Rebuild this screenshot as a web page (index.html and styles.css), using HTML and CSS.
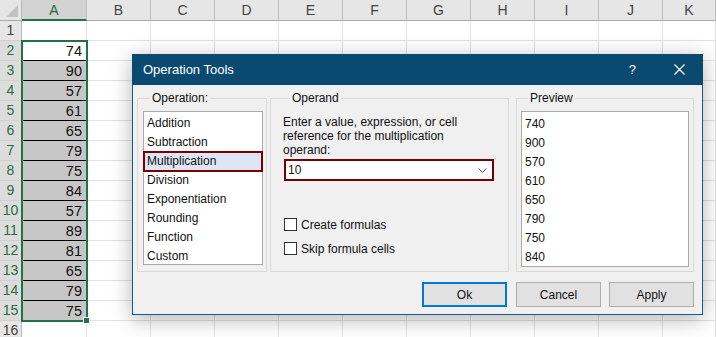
FILE: index.html
```html
<!DOCTYPE html>
<html lang="en">
<head>
  <meta charset="UTF-8">
  <title>Operation Tools</title>
  <link rel="stylesheet" href="styles.css">
</head>
<body>

  <div class="sheet" id="sheet">
    <div class="selection"><span class="handle"></span></div>
  </div>

  <div class="dialog">
    <div class="titlebar">
      <span class="title">Operation Tools</span>
      <span class="help">?</span>
      <svg class="close" width="11" height="11" viewBox="0 0 11 11">
        <path d="M0.5 0.5 L10.5 10.5 M10.5 0.5 L0.5 10.5" stroke="#fff" stroke-width="1.2" fill="none" />
      </svg>
    </div>

    <div class="body">
      <div class="groups">
        <fieldset class="group group-op">
          <legend>Operation:</legend>
          <ul class="list">
            <li>Addition</li>
            <li>Subtraction</li>
            <li class="selected">Multiplication</li>
            <li>Division</li>
            <li>Exponentiation</li>
            <li>Rounding</li>
            <li>Function</li>
            <li>Custom</li>
          </ul>
        </fieldset>

        <fieldset class="group group-operand">
          <legend>Operand</legend>
          <p class="hint">Enter a value, expression, or cell reference for the multiplication operand:</p>
          <div class="combo">
            <span>10</span>
            <svg width="9" height="5" viewBox="0 0 9 5">
              <path d="M0.5 0.5 L4.5 4.5 L8.5 0.5" stroke="#555" stroke-width="1" fill="none" />
            </svg>
          </div>
          <label class="check"><span class="box"></span>Create formulas</label>
          <label class="check"><span class="box"></span>Skip formula cells</label>
        </fieldset>

        <fieldset class="group group-preview">
          <legend>Preview</legend>
          <ul class="list preview">
            <li>740</li>
            <li>900</li>
            <li>570</li>
            <li>610</li>
            <li>650</li>
            <li>790</li>
            <li>750</li>
            <li>840</li>
          </ul>
        </fieldset>
      </div>

      <div class="buttons">
        <button class="btn default">Ok</button>
        <button class="btn">Cancel</button>
        <button class="btn">Apply</button>
      </div>
    </div>
  </div>

  <script>
    const sheet = document.getElementById('sheet');
    const cols = ['A', 'B', 'C', 'D', 'E', 'F', 'G', 'H', 'I', 'J', 'K'];
    const values = { 2: 74, 3: 90, 4: 57, 5: 61, 6: 65, 7: 79, 8: 75, 9: 84, 10: 57, 11: 89, 12: 81, 13: 65, 14: 79, 15: 75 };

    function cell(cls, text) {
      const div = document.createElement('div');
      div.className = cls;
      if (text !== undefined) div.textContent = text;
      sheet.appendChild(div);
    }

    // header row
    cell('corner');
    cols.forEach(c => cell(c === 'A' ? 'colhead active' : 'colhead', c));

    // rows
    for (let r = 1; r <= 16; r++) {
      const picked = values[r] !== undefined;
      cell(picked ? 'rowhead active' : 'rowhead', r);
      cols.forEach(c => {
        if (c === 'A' && picked) {
          let cls = 'cell num';
          if (r > 2) cls += ' filled';
          if (r < 15) cls += ' ruled';
          cell(cls, values[r]);
        } else {
          cell('cell');
        }
      });
    }
  </script>

</body>
</html>
```

FILE: styles.css
```css
* {
  box-sizing: border-box;
}

body {
  margin: 0;
  width: 716px;
  height: 337px;
  overflow: hidden;
  position: relative;
  background: #fff;
  font-family: 'Liberation Sans', Arial, sans-serif;
}

/* spreadsheet */

.sheet {
  display: grid;
  grid-template-columns: 22px 65px repeat(9, 64px) 1fr;
  grid-template-rows: 21px;
  grid-auto-rows: 20px;
  position: relative;
  font-size: 14px;
  color: #222;
}

.corner {
  background: #e6e6e6;
  border-right: 1px solid #bdbdbd;
  border-bottom: 1px solid #ababab;
  position: relative;
}

.corner::after {
  content: '';
  position: absolute;
  right: 3px;
  bottom: 3px;
  border-left: 12px solid transparent;
  border-bottom: 12px solid #c2c2c2;
}

.colhead {
  background: #e6e6e6;
  border-right: 1px solid #bdbdbd;
  border-bottom: 1px solid #ababab;
  text-align: center;
  line-height: 20px;
  color: #444;
}

.colhead.active {
  background: #d2d2d2;
  color: #1e6b41;
  border-bottom: 2px solid #217346;
}

.rowhead {
  background: #e6e6e6;
  border-right: 1px solid #bdbdbd;
  border-bottom: 1px solid #d0d0d0;
  text-align: center;
  line-height: 19px;
  color: #444;
}

.rowhead.active {
  background: #dcdcdc;
  color: #2d6a47;
}

.cell {
  border-right: 1px solid #e1e1e1;
  border-bottom: 1px solid #e1e1e1;
}

.cell.num {
  text-align: right;
  padding-right: 4px;
  line-height: 20px;
  color: #111;
  font-size: 14.5px;
}

.cell.filled {
  background: #c6c6c6;
}

.cell.ruled {
  border-bottom: 1px solid #000;
}

.selection {
  position: absolute;
  left: 21px;
  top: 40px;
  width: 67px;
  height: 282px;
  border: 2px solid #217346;
}

.handle {
  position: absolute;
  right: -4px;
  bottom: -4px;
  width: 7px;
  height: 7px;
  background: #217346;
  border: 1px solid #fff;
}

/* dialog */

.dialog {
  position: absolute;
  left: 132px;
  top: 54px;
  width: 571px;
  height: 261px;
  background: #f0f0f0;
  border: 1px solid #1b5a86;
  border-top: none;
  box-shadow: 0 4px 20px rgba(0, 0, 0, 0.3);
  font-size: 12px;
  color: #111;
}

.titlebar {
  height: 31px;
  margin: 0 -1px;
  background: #0b4a70;
  color: #fff;
  display: flex;
  align-items: center;
  padding-left: 11px;
  font-size: 13px;
}

.title {
  flex: 1;
}

.help {
  margin-right: 38px;
  font-size: 13px;
}

.close {
  margin-right: 18px;
}

.body {
  padding: 5px 8px 0 4px;
}

.groups {
  display: flex;
  height: 182px;
}

.group {
  margin: 0;
  padding: 0;
  border: 1px solid #d9d9d9;
  min-width: 0;
}

.group legend {
  line-height: 16px;
  padding: 0 2px;
  margin-left: 7px;
}

.group-op {
  width: 130px;
  padding: 5px 3px 6px 5px;
}

.group-operand {
  width: 239px;
  margin-left: 3px;
  padding: 9px 14px 0 12px;
}

.group-preview {
  width: 178px;
  margin-left: 7px;
  padding: 5px 4px 4px 4px;
}

.list {
  list-style: none;
  margin: 0;
  padding: 2px 0 0;
  background: #fff;
  border: 1px solid #a9a9a9;
  height: 100%;
}

.list li {
  height: 19px;
  line-height: 19px;
  padding-left: 3px;
  white-space: nowrap;
}

.list li.selected {
  background: #dce6f4;
  outline: 2px solid #780000;
  outline-offset: -1px;
}

.hint {
  margin: 0;
  line-height: 14px;
}

.combo {
  margin-top: 2px;
  margin-left: 1px;
  height: 22px;
  border: 2px solid #780000;
  background: #fff;
  display: flex;
  align-items: center;
  justify-content: space-between;
  padding: 0 5px 0 2px;
}

.check {
  display: flex;
  align-items: center;
  margin-left: 1px;
  height: 13px;
  margin-top: 11px;
}

.combo + .check {
  margin-top: 37px;
}

.box {
  width: 13px;
  height: 13px;
  border: 1px solid #333;
  background: #fff;
  margin-right: 4px;
}

.preview {
  padding-top: 3px;
}

.preview li {
  padding-left: 3px;
}

.buttons {
  display: flex;
  justify-content: flex-end;
  gap: 8px;
  margin-top: 10px;
}

.btn {
  width: 85px;
  height: 25px;
  font-family: inherit;
  font-size: 12px;
  color: #111;
  background: #e1e1e1;
  border: 1px solid #adadad;
  padding: 0;
}

.btn.default {
  border: 2px solid #0078d7;
  margin-right: 1px;
}
```
